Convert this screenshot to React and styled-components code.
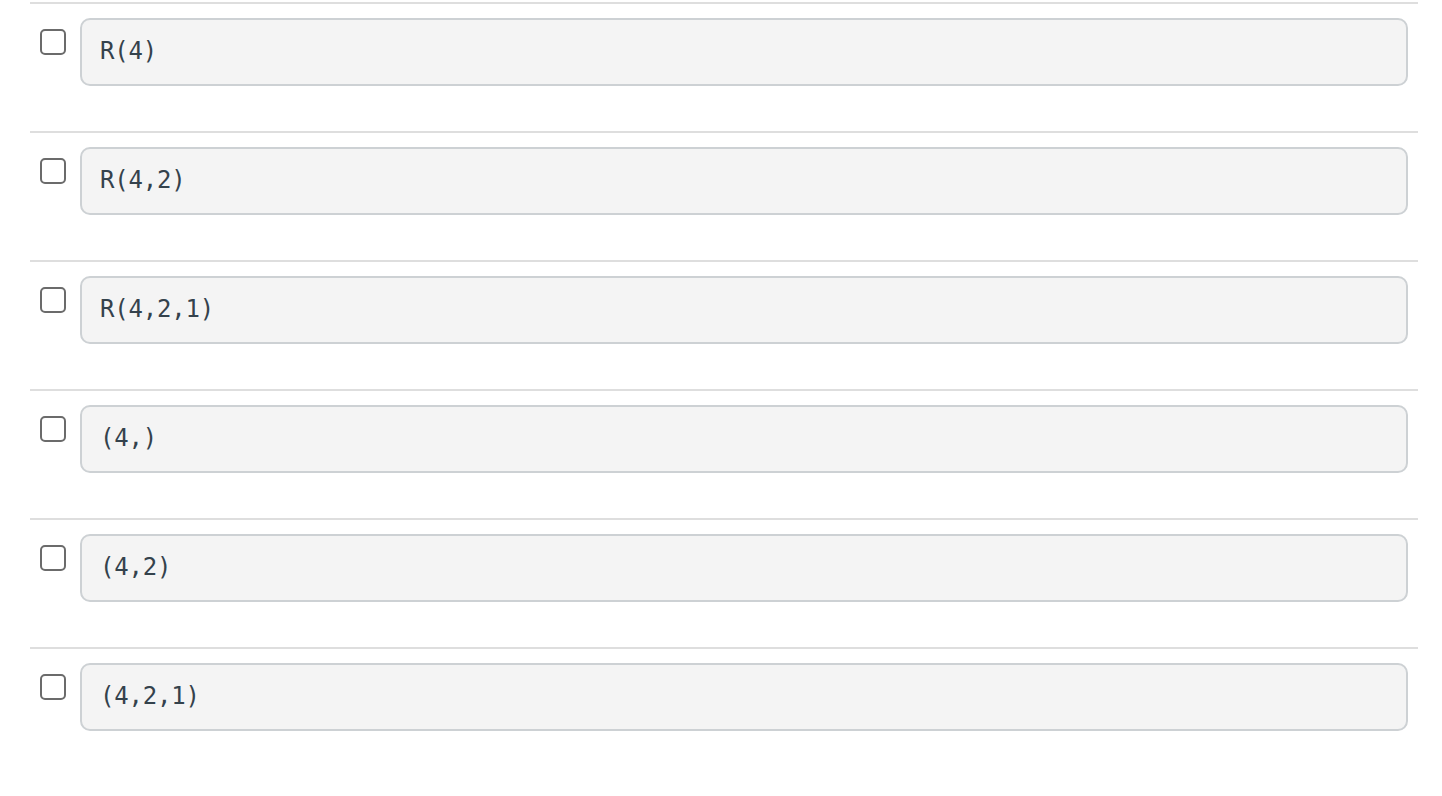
import React from "react";
import styled, { createGlobalStyle } from "styled-components";

const Global = createGlobalStyle`
  html, body { margin: 0; padding: 0; background: #fff; }
  body { font-family: "DejaVu Sans", sans-serif; }
`;

const List = styled.div`
  padding: 2px 24px 0 30px;
`;

const Row = styled.div`
  display: flex;
  align-items: flex-start;
  border-top: 2px solid #dedede;
  padding: 14px 10px 45px 10px;
`;

const Check = styled.input.attrs({ type: "checkbox" })`
  appearance: none;
  -webkit-appearance: none;
  margin: 11px 14px 0 0;
  width: 26px;
  height: 26px;
  flex: none;
  box-sizing: border-box;
  border: 2px solid #6b6b6b;
  border-radius: 5px;
  background: #fff;
`;

const Field = styled.div`
  flex: 1;
  box-sizing: border-box;
  height: 68px;
  display: flex;
  align-items: center;
  padding: 0 18px 2px 18px;
  background: #f4f4f4;
  border: 2px solid #cdd1d4;
  border-radius: 10px;
  font-family: "DejaVu Sans Mono", "Liberation Mono", monospace;
  font-size: 24px;
  letter-spacing: -0.2px;
  color: #34424c;
`;

const items = ["R(4)", "R(4,2)", "R(4,2,1)", "(4,)", "(4,2)", "(4,2,1)"];

export default function App() {
  return (
    <>
      <Global />
      <List>
        {items.map((t) => (
          <Row key={t}>
            <Check />
            <Field>{t}</Field>
          </Row>
        ))}
      </List>
    </>
  );
}
